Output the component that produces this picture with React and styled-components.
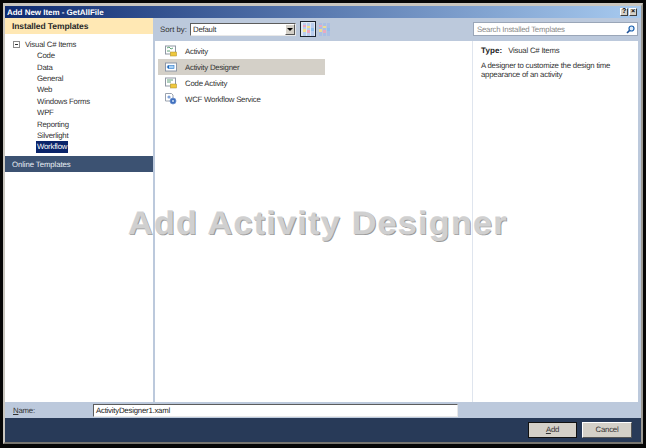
import React from 'react';
import styled, { createGlobalStyle } from 'styled-components';

const GlobalStyle = createGlobalStyle`
  html, body {
    margin: 0;
    padding: 0;
    background: #000;
  }
  * {
    box-sizing: border-box;
  }
`;

const Page = styled.div`
  width: 646px;
  height: 448px;
  padding: 3px;
  background: #060606;
  font-family: "Liberation Sans", Arial, sans-serif;
  font-size: 7.8px;
  letter-spacing: -0.22px;
  text-rendering: geometricPrecision;
  color: #333;
`;

const Window = styled.div`
  position: relative;
  width: 640px;
  height: 441px;
  display: flex;
  flex-direction: column;
  border: 2px solid #c9c6bf;
  border-top-width: 3px;
  border-right-color: #9c9a94;
  border-bottom-color: #77756f;
  background: #bcc9dc;
`;

const TitleBar = styled.div`
  height: 12px;
  flex: none;
  display: flex;
  align-items: center;
  justify-content: space-between;
  padding: 0 4px 0 2px;
  background: linear-gradient(to right, #0d2a70, #a8cbf0);
  color: #fff;
  font-weight: bold;
  font-size: 8px;
  letter-spacing: -0.03px;
`;

const TitleButtons = styled.div`
  display: flex;
  gap: 1px;
`;

const TitleButton = styled.div`
  width: 8px;
  height: 8px;
  background: #d4d0c8;
  border: 1px solid;
  border-color: #fff #404040 #404040 #fff;
  color: #000;
  font-size: 7px;
  font-weight: bold;
  line-height: 6px;
  text-align: center;
`;

const Main = styled.div`
  flex: 1;
  display: flex;
  min-height: 0;
`;

const Sidebar = styled.div`
  width: 148px;
  flex: none;
  display: flex;
  flex-direction: column;
  background: #fff;
`;

const SideHead = styled.div`
  height: 16px;
  flex: none;
  padding-left: 7px;
  display: flex;
  align-items: center;
  font-size: ${p => (p.$online ? '7.8px' : '8.5px')};
  font-weight: ${p => (p.$online ? 'normal' : 'bold')};
  letter-spacing: -0.1px;
  background: ${p => (p.$online ? '#3c5272' : '#ffe8b4')};
  color: ${p => (p.$online ? '#e8edf4' : '#2a2a2a')};
`;

const Tree = styled.div`
  height: 122px;
  flex: none;
  padding: 4px 0 0 8px;
`;

const TreeRoot = styled.div`
  height: 12px;
  display: flex;
  align-items: center;
  gap: 5px;
`;

const Toggle = styled.span`
  position: relative;
  width: 7px;
  height: 7px;
  border: 1px solid #8b8b8b;
  &::after {
    content: '';
    position: absolute;
    left: 1px;
    top: 2px;
    width: 3px;
    height: 1px;
    background: #333;
  }
`;

const TreeItem = styled.div`
  height: 11.4px;
  margin-left: 23px;
  padding: 0 1px;
  width: fit-content;
  display: flex;
  align-items: center;
  background: ${p => (p.$selected ? '#0a246a' : 'transparent')};
  color: ${p => (p.$selected ? '#fff' : '#333')};
`;

const Content = styled.div`
  flex: 1;
  min-width: 0;
  display: flex;
  flex-direction: column;
  padding-left: 2px;
  padding-right: 3px;
`;

const Toolbar = styled.div`
  height: 23px;
  flex: none;
  display: flex;
  align-items: center;
  padding-left: 5px;
  padding-bottom: 1px;
`;

const SortLabel = styled.span`
  width: 30px;
  letter-spacing: 0;
`;

const SortSelect = styled.div`
  width: 106px;
  height: 13px;
  display: flex;
  align-items: center;
  justify-content: space-between;
  padding-left: 2px;
  background: #fff;
  border: 1px solid;
  border-color: #5c5c5c #e8e8e8 #e8e8e8 #5c5c5c;
`;

const SelectArrow = styled.span`
  width: 10px;
  height: 11px;
  display: flex;
  align-items: center;
  justify-content: center;
  background: #d4d0c8;
  border: 1px solid;
  border-color: #fff #555 #555 #fff;
  &::after {
    content: '';
    border: 3px solid transparent;
    border-top-color: #000;
    border-bottom-width: 0;
  }
`;

const ViewButton = styled.div`
  width: ${p => (p.$active ? '16px' : '12px')};
  height: ${p => (p.$active ? '16px' : '13px')};
  flex: none;
  margin-left: ${p => (p.$active ? '4px' : '2px')};
  display: flex;
  align-items: center;
  justify-content: center;
  border: ${p => (p.$active ? '1px solid #1c2430' : 'none')};
  background: ${p => (p.$active ? '#dfe8f4' : 'transparent')};
`;

const SearchBox = styled.div`
  width: 165px;
  height: 14px;
  margin-left: auto;
  display: flex;
  align-items: center;
  justify-content: space-between;
  padding: 0 2px 0 3px;
  background: #fff;
  border: 1px solid #9aa6b8;
  color: #8a8a8a;
`;

const Panels = styled.div`
  flex: 1;
  display: flex;
  min-height: 0;
  background: #fff;
`;

const ItemList = styled.div`
  width: 318px;
  flex: none;
  padding: 2px 0 0 3px;
  border-right: 1px solid #dfe5ee;
`;

const ItemRow = styled.div`
  width: 167px;
  height: 16px;
  display: flex;
  align-items: center;
  gap: 8px;
  padding-left: 7px;
  background: ${p => (p.$selected ? '#d4d0c8' : 'transparent')};
`;

const Details = styled.div`
  flex: 1;
  padding: 5px 8px;
  line-height: 9.5px;
`;

const TypeLine = styled.div`
  margin-bottom: 5px;
  b {
    margin-right: 4px;
    font-size: 8px;
    letter-spacing: 0.1px;
    color: #222;
  }
`;

const NameBar = styled.div`
  height: 16px;
  flex: none;
  display: flex;
  align-items: center;
  padding-left: 8px;
  background: #bcc9dc;
`;

const NameLabel = styled.span`
  width: 80px;
`;

const NameInput = styled.div`
  width: 365px;
  height: 13px;
  display: flex;
  align-items: center;
  padding-left: 2px;
  background: #fff;
  border: 1px solid;
  border-color: #5c5c5c #e8e8e8 #e8e8e8 #5c5c5c;
  color: #222;
`;

const Footer = styled.div`
  height: 24px;
  flex: none;
  display: flex;
  align-items: center;
  justify-content: flex-end;
  gap: 5px;
  padding-right: 9px;
  background: #283a58;
`;

const Button = styled.div`
  width: ${p => (p.$default ? '49px' : '50px')};
  height: 16px;
  line-height: 14px;
  text-align: center;
  background: #d4d0c8;
  border: 1px solid;
  border-color: ${p => (p.$default ? '#111' : '#fff #555 #555 #fff')};
`;

const Watermark = styled.div`
  position: absolute;
  left: 123px;
  top: 199px;
  font-size: 32.5px;
  font-weight: bold;
  letter-spacing: 1.2px;
  white-space: nowrap;
  transform: scaleX(1.05);
  transform-origin: left center;
  color: #d0d0d0;
  -webkit-text-stroke: 0.3px #d0d0d0;
  text-shadow: 1px 1px 0 #9a9a9a;
`;

const ColumnsIcon = ({ faded }) => (
  <svg width="11" height="13" viewBox="0 0 11 13" opacity={faded ? 0.9 : 1}>
    <rect x="0" y="0" width="3" height="13" fill={faded ? '#a9bfe6' : '#b9cdee'} />
    <rect x="4" y="0" width="3" height="13" fill={faded ? '#a9bfe6' : '#b9cdee'} />
    <rect x="8" y="0" width="3" height="13" fill={faded ? '#a9bfe6' : '#b9cdee'} />
    <rect x="0" y="2" width="3" height="2" fill="#eea6c0" />
    <rect x="0" y="6" width="3" height="3" fill="#f3e08a" />
    <rect x="4" y="3" width="3" height="2" fill="#f3e08a" />
    <rect x="4" y="7" width="3" height="3" fill="#eea6c0" />
    <rect x="8" y="5" width="3" height="3" fill="#8fc0ee" />
  </svg>
);

const SearchIcon = () => (
  <svg width="9" height="9" viewBox="0 0 9 9">
    <circle cx="5.5" cy="3.5" r="2.5" fill="#dcebfa" stroke="#1c62b0" strokeWidth="1.2" />
    <path d="M3.6 5.4 L1 8" stroke="#1c4f96" strokeWidth="1.6" />
  </svg>
);

const TemplateIcon = ({ kind }) => {
  if (kind === 'designer') {
    return (
      <svg width="12" height="12" viewBox="0 0 12 12">
        <rect x="0.5" y="2" width="11" height="8" fill="#fff" stroke="#8c96a6" />
        <rect x="3" y="4.5" width="6" height="3" fill="#a8d0f4" stroke="#2a78c8" strokeWidth="0.6" />
        <path d="M1.5 6 L4 4.5 V7.5 Z" fill="#1f66b8" />
      </svg>
    );
  }
  if (kind === 'wcf') {
    return (
      <svg width="12" height="12" viewBox="0 0 12 12">
        <path d="M0.5 0.5 H6.5 L8 2 V8 H0.5 Z" fill="#fff" stroke="#9aa2ae" />
        <circle cx="4" cy="4" r="1.6" fill="#7fa2d8" />
        <circle cx="8" cy="8" r="3" fill="#3f6fbe" stroke="#6f93cf" strokeWidth="0.8" />
        <circle cx="8" cy="8" r="1" fill="#cfe0f6" />
      </svg>
    );
  }
  return (
    <svg width="12" height="12" viewBox="0 0 12 12">
      <rect x="0.5" y="1" width="10" height="8" fill="#fff" stroke="#8f97a3" />
      {kind === 'code' ? (
        <path d="M2 3 H8 M2 5 H6" stroke="#3a8a5a" strokeWidth="0.8" />
      ) : (
        <path d="M2 3 L4 2 L6 4 L8 3 M2 6 H5" stroke="#4f9a6a" strokeWidth="0.9" fill="none" />
      )}
      <rect x="5.5" y="7" width="6" height="4" fill="#efc83e" stroke="#a88a20" strokeWidth="0.5" />
    </svg>
  );
};

const treeItems = ['Code', 'Data', 'General', 'Web', 'Windows Forms', 'WPF', 'Reporting', 'Silverlight', 'Workflow'];

const templates = [
  { name: 'Activity', kind: 'activity' },
  { name: 'Activity Designer', kind: 'designer', selected: true },
  { name: 'Code Activity', kind: 'code' },
  { name: 'WCF Workflow Service', kind: 'wcf' },
];

const App = () => (
  <>
    <GlobalStyle />
    <Page>
      <Window>
        <TitleBar>
          <span>Add New Item - GetAllFile</span>
          <TitleButtons>
            <TitleButton>?</TitleButton>
            <TitleButton>×</TitleButton>
          </TitleButtons>
        </TitleBar>
        <Main>
          <Sidebar>
            <SideHead>Installed Templates</SideHead>
            <Tree>
              <TreeRoot>
                <Toggle />
                Visual C# Items
              </TreeRoot>
              {treeItems.map(item => (
                <TreeItem key={item} $selected={item === 'Workflow'}>{item}</TreeItem>
              ))}
            </Tree>
            <SideHead $online>Online Templates</SideHead>
          </Sidebar>
          <Content>
            <Toolbar>
              <SortLabel>Sort by:</SortLabel>
              <SortSelect>
                Default
                <SelectArrow />
              </SortSelect>
              <ViewButton $active><ColumnsIcon /></ViewButton>
              <ViewButton><ColumnsIcon faded /></ViewButton>
              <SearchBox>
                Search Installed Templates
                <SearchIcon />
              </SearchBox>
            </Toolbar>
            <Panels>
              <ItemList>
                {templates.map(t => (
                  <ItemRow key={t.name} $selected={t.selected}>
                    <TemplateIcon kind={t.kind} />
                    {t.name}
                  </ItemRow>
                ))}
              </ItemList>
              <Details>
                <TypeLine><b>Type:</b> Visual C# Items</TypeLine>
                A designer to customize the design time appearance of an activity
              </Details>
            </Panels>
          </Content>
        </Main>
        <NameBar>
          <NameLabel><u>N</u>ame:</NameLabel>
          <NameInput>ActivityDesigner1.xaml</NameInput>
        </NameBar>
        <Footer>
          <Button $default><u>A</u>dd</Button>
          <Button>Cancel</Button>
        </Footer>
        <Watermark>Add Activity Designer</Watermark>
      </Window>
    </Page>
  </>
);

export default App;
